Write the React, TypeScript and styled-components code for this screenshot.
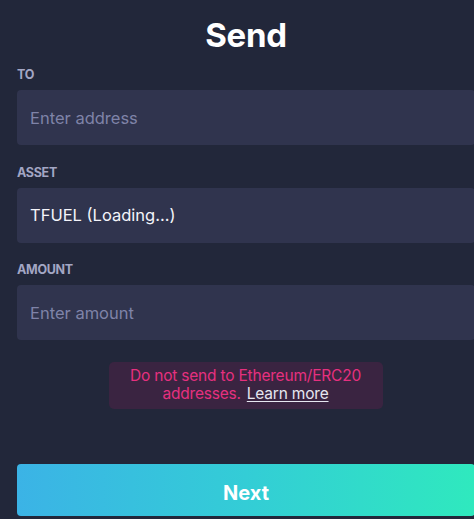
import React from "react";
import styled, { createGlobalStyle } from "styled-components";

const GlobalStyle = createGlobalStyle`
  html, body {
    margin: 0;
    padding: 0;
    background: #22273a;
    overflow: hidden;
  }
  body {
    font-family: Inter, "Noto Sans", sans-serif;
    width: 474px;
    height: 519px;
  }
  * { box-sizing: border-box; }
`;

const Page = styled.div`
  width: 474px;
  height: 519px;
  background: #22273a;
  overflow: hidden;
`;

const Form = styled.div`
  width: 458px;
  margin-left: 17px;
  display: flex;
  flex-direction: column;
`;

const Title = styled.h1`
  margin: 0;
  padding-top: 15px;
  height: 56px;
  text-align: center;
  font-size: 33px;
  line-height: 40px;
  font-weight: 700;
  color: #ffffff;
  letter-spacing: -0.3px;
`;

const Fields = styled.div`
  margin-top: 12px;
  display: flex;
  flex-direction: column;
  gap: 20.5px;
`;

const Field = styled.div`
  display: flex;
  flex-direction: column;
  gap: 8px;
`;

const Label = styled.label`
  font-size: 12.5px;
  line-height: 14px;
  font-weight: 700;
  color: #a3a6c4;
  text-transform: uppercase;
  letter-spacing: -0.3px;
`;

const InputBox = styled.div<{ $filled?: boolean }>`
  height: 55px;
  border-radius: 4px;
  background: #30344e;
  display: flex;
  align-items: center;
  padding-left: 13px;
  font-size: 16.5px;
  color: ${(p) => (p.$filled ? "#f4f4fa" : "#7f83a8")};
`;

const WarningWrap = styled.div`
  margin-top: 22px;
  display: flex;
  justify-content: center;
  padding-right: 1px;
`;

const Warning = styled.div`
  width: 274px;
  height: 47px;
  border-radius: 5px;
  background: #3a2441;
  color: #e6307f;
  font-size: 15.5px;
  line-height: 18px;
  text-align: center;
  padding-top: 5px;
  letter-spacing: -0.2px;
`;

const WarningLine = styled.div`
  white-space: nowrap;
`;

const LearnMore = styled.a`
  color: #e6e6f0;
  text-decoration: underline;
  text-underline-offset: 2px;
  margin-left: 6px;
`;

const NextButton = styled.button`
  margin-top: 55px;
  height: 52px;
  width: 100%;
  border: none;
  border-radius: 4px;
  background: linear-gradient(90deg, #3bb3e6 0%, #33cdd6 50%, #2fe9be 100%);
  color: #ffffff;
  font-family: Inter, "Noto Sans", sans-serif;
  font-size: 20px;
  font-weight: 700;
  text-align: left;
  padding: 5px 0 0 206px;
`;

export default function App() {
  return (
    <Page>
      <GlobalStyle />
      <Form>
        <Title>Send</Title>
        <Fields>
          <Field>
            <Label>To</Label>
            <InputBox>Enter address</InputBox>
          </Field>
          <Field>
            <Label>Asset</Label>
            <InputBox $filled>TFUEL (Loading...)</InputBox>
          </Field>
          <Field>
            <Label>Amount</Label>
            <InputBox>Enter amount</InputBox>
          </Field>
        </Fields>
        <WarningWrap>
          <Warning>
            <WarningLine>Do not send to Ethereum/ERC20</WarningLine>
            <WarningLine>
              addresses.<LearnMore>Learn more</LearnMore>
            </WarningLine>
          </Warning>
        </WarningWrap>
        <NextButton>Next</NextButton>
      </Form>
    </Page>
  );
}
